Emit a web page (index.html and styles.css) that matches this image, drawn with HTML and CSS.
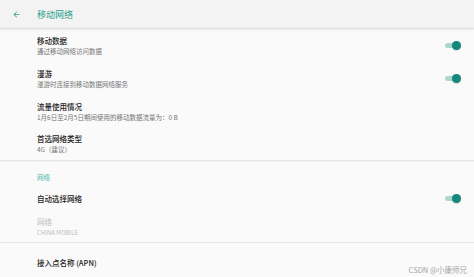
FILE: index.html
```html
<!DOCTYPE html>
<html lang="zh">
<head>
<meta charset="utf-8">
<link rel="stylesheet" href="styles.css">
</head>
<body>
<header class="appbar">
  <svg class="back" width="9" height="9" viewBox="0 0 24 24"><path d="M20 11H7.83l5.59-5.59L12 4l-8 8 8 8 1.41-1.41L7.83 13H20v-2z" fill="#2a9d90"/></svg>
  <span class="appbar-title">移动网络</span>
</header>
<main class="list">
  <div class="row">
    <div class="texts"><div class="title">移动数据</div><div class="summary">通过移动网络访问数据</div></div>
    <span class="switch"><span class="thumb"></span></span>
  </div>
  <div class="row">
    <div class="texts"><div class="title">漫游</div><div class="summary">漫游时连接到移动数据网络服务</div></div>
    <span class="switch"><span class="thumb"></span></span>
  </div>
  <div class="row">
    <div class="texts"><div class="title">流量使用情况</div><div class="summary">1月6日至2月5日期间使用的移动数据流量为：0 B</div></div>
  </div>
  <div class="row">
    <div class="texts"><div class="title">首选网络类型</div><div class="summary">4G（建议）</div></div>
  </div>
  <div class="category">网络</div>
  <div class="row row-single">
    <div class="texts"><div class="title">自动选择网络</div></div>
    <span class="switch"><span class="thumb"></span></span>
  </div>
  <div class="row row-divider disabled">
    <div class="texts"><div class="title">网络</div><div class="summary">CHINA MOBILE</div></div>
  </div>
  <div class="row row-apn">
    <div class="texts"><div class="title">接入点名称 (APN)</div></div>
    <span class="watermark">CSDN @小康师兄</span>
  </div>
</main>
</body>
</html>
```
FILE: styles.css
```css
html, body {
  margin: 0;
  padding: 0;
  background: #fafafa;
  font-family: "Noto Sans CJK SC", "Noto Sans", sans-serif;
  width: 474px;
  height: 277px;
  overflow: hidden;
}
.appbar {
  height: 29px;
  background: #f3f3f3;
  border-bottom: 1px solid #dedede;
  box-shadow: 0 1px 2px rgba(0,0,0,0.06);
  display: flex;
  align-items: center;
  box-sizing: border-box;
}
.back {
  margin-left: 12px;
  margin-right: 16px;
  margin-top: 1px;
}
.appbar-title {
  font-size: 9px;
  color: #2a9d90;
  margin-top: 1px;
}
.list {
  display: flex;
  flex-direction: column;
}
.row {
  height: 33px;
  display: flex;
  align-items: center;
  padding-left: 37px;
  padding-right: 13px;
  box-sizing: border-box;
}
.texts {
  flex: 1;
  display: flex;
  flex-direction: column;
}
.title {
  font-size: 7.5px;
  line-height: 10px;
  color: #222;
  font-weight: 500;
}
.summary {
  font-size: 6.5px;
  line-height: 9px;
  color: #757575;
  margin-top: 1px;
}
.row:nth-child(4) {
  border-bottom: 1px solid #e6e6e6;
  box-shadow: 0 1px 1px rgba(0,0,0,0.03);
}
.category {
  height: 24px;
  padding-left: 37px;
  font-size: 6.5px;
  color: #4db6ac;
  display: flex;
  align-items: flex-end;
  padding-bottom: 3px;
  box-sizing: border-box;
}
.row-single {
  height: 27px;
}
.row-divider {
  height: 31px;
  border-bottom: 1px solid #e6e6e6;
}
.disabled .title,
.disabled .summary {
  color: #bdbdbd;
  font-weight: 400;
}
.disabled .summary {
  font-size: 6px;
}
.row-apn {
  height: 40px;
  position: relative;
}
.switch {
  position: relative;
  width: 16px;
  height: 9px;
  display: block;
}
.switch::before {
  content: "";
  position: absolute;
  left: 0;
  top: 2px;
  width: 14px;
  height: 5px;
  border-radius: 3px;
  background: #a9d8d2;
}
.thumb {
  position: absolute;
  right: 0;
  top: 0;
  width: 9px;
  height: 9px;
  border-radius: 50%;
  background: #12897c;
  box-shadow: 0 0.5px 1px rgba(0,0,0,0.25);
}
.watermark {
  position: absolute;
  right: 7px;
  top: 21px;
  font-size: 7.5px;
  color: #a3a3a3;
}
```
